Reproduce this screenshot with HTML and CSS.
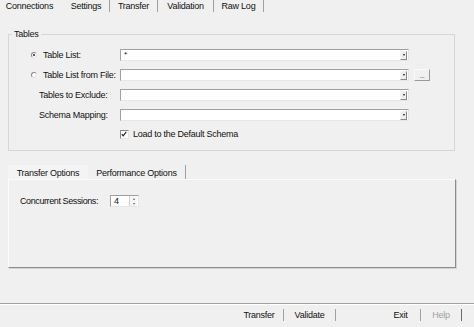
FILE: index.html
```html
<!DOCTYPE html>
<html>
<head>
<meta charset="utf-8">
<link rel="stylesheet" href="styles.css">
</head>
<body>
<div class="app">
  <nav class="tabs">
    <span class="tab tab-conn">Connections</span>
    <span class="tab tab-set sep">Settings</span>
    <span class="tab tab-tr sep">Transfer</span>
    <span class="tab tab-val sep">Validation</span>
    <span class="tab tab-raw sep">Raw Log</span>
  </nav>

  <fieldset class="group">
    <legend>Tables</legend>
    <div class="rows">
      <div class="row">
        <div class="lead"><span class="radio on"></span><span class="lbl">Table List:</span></div>
        <div class="combo"><span class="val">*</span><span class="drop"></span></div>
      </div>
      <div class="row">
        <div class="lead"><span class="radio"></span><span class="lbl">Table List from File:</span></div>
        <div class="combo"><span class="val"></span><span class="drop"></span></div>
        <span class="browse">...</span>
      </div>
      <div class="row">
        <div class="lead plain"><span class="lbl">Tables to Exclude:</span></div>
        <div class="combo"><span class="val"></span><span class="drop"></span></div>
      </div>
      <div class="row">
        <div class="lead plain"><span class="lbl">Schema Mapping:</span></div>
        <div class="combo"><span class="val"></span><span class="drop"></span></div>
      </div>
      <div class="row check-row">
        <span class="check"><svg width="9" height="9" viewBox="0 0 9 9"><path d="M2 4 L3.6 6 L7 1.5" fill="none" stroke="#222" stroke-width="1.3"/></svg></span>
        <span class="check-lbl">Load to the Default Schema</span>
      </div>
    </div>
  </fieldset>

  <nav class="subtabs">
    <span class="subtab sub-tr">Transfer Options</span>
    <span class="subtab sub-perf sep">Performance Options</span>
  </nav>
  <section class="panel">
    <div class="prow">
      <span class="plbl">Concurrent Sessions:</span>
      <div class="spin"><span class="val">4</span><span class="spin-btns"><span class="up"></span><span class="dn"></span></span></div>
    </div>
  </section>

  <footer class="footer">
    <span class="btn btn-transfer sep">Transfer</span>
    <span class="btn btn-validate sep">Validate</span>
    <span class="btn btn-exit sep">Exit</span>
    <span class="btn btn-help sep-dark">Help</span>
  </footer>
</div>
</body>
</html>
```
FILE: styles.css
```css
body {
  margin: 0;
  background: #f0f0f0;
  font-family: "Liberation Sans", Arial, sans-serif;
  font-size: 9px;
  letter-spacing: -0.25px;
  color: #111;
}
.app {
  width: 474px;
  height: 327px;
  display: flex;
  flex-direction: column;
  overflow: hidden;
}
.tabs {
  display: flex;
  height: 13px;
  align-items: flex-start;
}
.tab {
  height: 12px;
  line-height: 12px;
  text-align: center;
  box-sizing: border-box;
}
.sep { border-right: 1px solid #a0a0a0; }
.tab-conn { width: 63px; padding-right: 4px; }
.tab-set { width: 47px; }
.tab-tr { width: 48px; }
.tab-val { width: 56px; }
.tab-raw { width: 50px; }

.group {
  margin: 16px 0 0 8px;
  padding: 0;
  width: 447px;
  height: 122px;
  box-sizing: border-box;
  border: 1px solid #d6d6d6;
  min-width: 0;
}
.group legend {
  margin-left: 3px;
  padding: 0 2px;
  line-height: 10px;
}
.rows {
  margin-top: 10px;
  display: flex;
  flex-direction: column;
  gap: 8px;
}
.row {
  display: flex;
  align-items: center;
  height: 12px;
}
.lead {
  width: 111px;
  display: flex;
  align-items: center;
}
.lead.plain { padding-left: 30px; box-sizing: border-box; }
.radio {
  width: 6px;
  height: 6px;
  margin-left: 22px;
  border-radius: 50%;
  box-sizing: border-box;
  border: 1px solid;
  border-color: #8a8a8a #e2e2e2 #e2e2e2 #8a8a8a;
  background: #fff;
  position: relative;
}
.radio.on::after {
  content: "";
  position: absolute;
  left: 1px;
  top: 1px;
  width: 2px;
  height: 2px;
  background: #222;
  border-radius: 50%;
}
.lbl { margin-left: 6px; white-space: nowrap; }
.lead.plain .lbl { margin-left: 0; }

.combo {
  width: 289px;
  height: 12px;
  box-sizing: border-box;
  border: 1px solid;
  border-color: #a0a0a0 #e6e6e6 #e6e6e6 #a0a0a0;
  background: #fff;
  display: flex;
  align-items: center;
}
.combo .val {
  flex: 1;
  padding-left: 3px;
  line-height: 10px;
  font-size: 8px;
}
.drop {
  width: 7px;
  height: 9px;
  margin-right: 1px;
  box-sizing: border-box;
  border: 1px solid;
  border-color: #f4f4f4 #888 #888 #f4f4f4;
  background: #eee;
  display: flex;
  align-items: center;
  justify-content: center;
}
.drop::after {
  content: "";
  border-left: 1.5px solid transparent;
  border-right: 1.5px solid transparent;
  border-top: 2px solid #111;
}
.browse {
  margin-left: 5px;
  width: 16px;
  height: 12px;
  box-sizing: border-box;
  border: 1px solid;
  border-color: #fafafa #9a9a9a #9a9a9a #fafafa;
  font-size: 7px;
  line-height: 12px;
  text-align: center;
  color: #555;
}

.check-row {
  margin-top: -1px;
  height: 12px;
  align-items: center;
  padding-left: 111px;
}
.check {
  width: 9px;
  height: 9px;
  box-sizing: border-box;
  border: 1px solid;
  border-color: #8a8a8a #e6e6e6 #e6e6e6 #8a8a8a;
  background: #fff;
  display: flex;
}
.check svg { margin: -1px 0 0 -1px; }
.check-lbl {
  margin-left: 4px;
  line-height: 10px;
}

.subtabs {
  margin-top: 14px;
  display: flex;
  height: 14px;
  padding-left: 8px;
}
.subtab {
  height: 14px;
  line-height: 14px;
  padding-top: 1px;
  text-align: center;
  box-sizing: border-box;
}
.sub-tr { width: 80px; background: #f4f4f4; }
.sub-perf { width: 98px; }

.panel {
  margin-left: 8px;
  width: 448px;
  height: 89px;
  box-sizing: border-box;
  border: 1px solid;
  border-color: #fbfbfb #8c8c8c #8c8c8c #fbfbfb;
  box-shadow: 1px 1px 0 #d4d4d4;
  padding: 15px 0 0 11px;
}
.prow {
  display: flex;
  align-items: center;
  height: 12px;
}
.plbl { width: 90px; white-space: nowrap; letter-spacing: -0.4px; }
.spin {
  width: 29px;
  height: 12px;
  box-sizing: border-box;
  border: 1px solid;
  border-color: #a0a0a0 #e6e6e6 #e6e6e6 #a0a0a0;
  background: #fff;
  display: flex;
  align-items: center;
}
.spin .val { flex: 1; padding-left: 3px; }
.spin-btns {
  width: 7px;
  height: 10px;
  margin-right: 1px;
  display: flex;
  flex-direction: column;
  justify-content: space-around;
  align-items: center;
  border-left: 1px solid #d0d0d0;
  background: #f6f6f6;
}
.up {
  border-left: 1.5px solid transparent;
  border-right: 1.5px solid transparent;
  border-bottom: 2px solid #666;
}
.dn {
  border-left: 1.5px solid transparent;
  border-right: 1.5px solid transparent;
  border-top: 2px solid #666;
}

.footer {
  margin-top: 35px;
  border-top: 1px solid #a0a0a0;
  box-shadow: inset 0 1px 0 #fff;
  flex: 1;
  display: flex;
  align-items: flex-start;
  padding-top: 4px;
}
.btn {
  height: 12px;
  line-height: 12px;
  margin-top: 1px;
  text-align: center;
  box-sizing: border-box;
}
.btn-transfer { margin-left: 235px; width: 49px; }
.btn-validate { width: 52px; }
.btn-exit { margin-left: 45px; width: 40px; }
.btn-help { width: 41px; color: #a0a0a0; }
.sep-dark { border-right: 1px solid #6a6a6a; }
```
